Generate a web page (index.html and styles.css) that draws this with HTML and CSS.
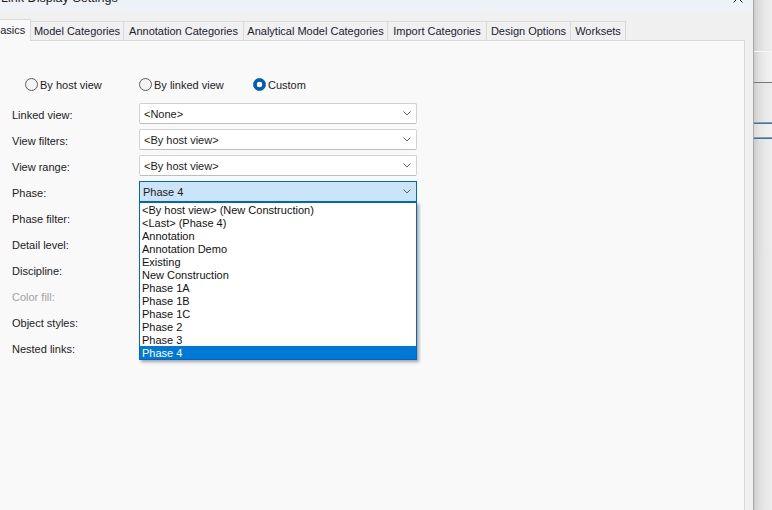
FILE: index.html
```html
<!DOCTYPE html>
<html lang="en">
<head>
<meta charset="utf-8">
<title>Link Display Settings</title>
<link rel="stylesheet" href="styles.css">
</head>
<body>
<div class="screen">
  <div class="dialog">
    <div class="titlebar">
      <span class="title">Link Display Settings</span>
      <svg class="close" width="10" height="10" viewBox="0 0 10 10"><path d="M0.5 0.5 L9.5 9.5 M9.5 0.5 L0.5 9.5" stroke="#1a1a1a" stroke-width="1" fill="none"/></svg>
    </div>
    <div class="body">
      <div class="tabs">
        <div class="tab active t-basics">Basics</div>
        <div class="tab t-model">Model Categories</div>
        <div class="tab t-annot">Annotation Categories</div>
        <div class="tab t-analyt">Analytical Model Categories</div>
        <div class="tab t-import">Import Categories</div>
        <div class="tab t-design">Design Options</div>
        <div class="tab t-work">Worksets</div>
      </div>
      <div class="panel">
        <div class="radios">
          <div class="radio"><span class="dot"></span><span>By host view</span></div>
          <div class="radio"><span class="dot"></span><span>By linked view</span></div>
          <div class="radio"><span class="dot checked"></span><span>Custom</span></div>
        </div>
        <div class="form">
          <div class="lbl">Linked view:</div>
          <div class="combo"><span>&lt;None&gt;</span><svg class="chev" width="8" height="5" viewBox="0 0 8 5"><path d="M0.5 0.5 L4 4 L7.5 0.5" stroke="#5f5f5f" fill="none"/></svg></div>

          <div class="lbl">View filters:</div>
          <div class="combo"><span>&lt;By host view&gt;</span><svg class="chev" width="8" height="5" viewBox="0 0 8 5"><path d="M0.5 0.5 L4 4 L7.5 0.5" stroke="#5f5f5f" fill="none"/></svg></div>

          <div class="lbl">View range:</div>
          <div class="combo"><span>&lt;By host view&gt;</span><svg class="chev" width="8" height="5" viewBox="0 0 8 5"><path d="M0.5 0.5 L4 4 L7.5 0.5" stroke="#5f5f5f" fill="none"/></svg></div>

          <div class="lbl">Phase:</div>
          <div class="combo-wrap">
            <div class="combo focused"><span>Phase 4</span><svg class="chev" width="8" height="5" viewBox="0 0 8 5"><path d="M0.5 0.5 L4 4 L7.5 0.5" stroke="#5f5f5f" fill="none"/></svg></div>
            <ul class="list">
              <li>&lt;By host view&gt; (New Construction)</li>
              <li>&lt;Last&gt; (Phase 4)</li>
              <li>Annotation</li>
              <li>Annotation Demo</li>
              <li>Existing</li>
              <li>New Construction</li>
              <li>Phase 1A</li>
              <li>Phase 1B</li>
              <li>Phase 1C</li>
              <li>Phase 2</li>
              <li>Phase 3</li>
              <li class="sel">Phase 4</li>
            </ul>
          </div>

          <div class="lbl">Phase filter:</div>
          <div class="combo"></div>

          <div class="lbl">Detail level:</div>
          <div class="combo"></div>

          <div class="lbl">Discipline:</div>
          <div class="combo"></div>

          <div class="lbl disabled">Color fill:</div>
          <div class="combo"></div>

          <div class="lbl">Object styles:</div>
          <div class="combo"></div>

          <div class="lbl">Nested links:</div>
          <div class="combo"></div>
        </div>
      </div>
    </div>
  </div>
  <div class="backdrop">
    <div class="bk-seg bk-h51"></div>
    <div class="bk-line bk-light"></div>
    <div class="bk-seg bk-h30"></div>
    <div class="bk-line bk-dark"></div>
    <div class="bk-seg bk-h39"></div>
    <div class="bk-line bk-grey"></div>
    <div class="bk-line bk-blue"></div>
    <div class="bk-seg bk-h13"></div>
    <div class="bk-line bk-grey"></div>
    <div class="bk-line bk-blue"></div>
  </div>
</div>
</body>
</html>
```

FILE: styles.css
```css
* { box-sizing: border-box; }

html, body {
  margin: 0;
  padding: 0;
  width: 772px;
  height: 510px;
  overflow: hidden;
  background: #f0f0f0;
}

body {
  font-family: "Liberation Sans", Arial, sans-serif;
  font-size: 11px;
  color: #1b1b1b;
}

.screen {
  display: flex;
  width: 772px;
  height: 510px;
}

/* ---------- dialog ---------- */
.dialog {
  width: 754px;
  height: 510px;
  display: flex;
  flex-direction: column;
  background: #f0f0f0;
  border-right: 1px solid #a8a8a8;
}

.titlebar {
  height: 12px;
  flex: none;
  background: #eef2f7;
  display: flex;
  align-items: flex-start;
  overflow: hidden;
}

.title {
  font-size: 12.6px;
  line-height: 12px;
  margin-top: -8px;
  padding-left: 1px;
  color: #1b1b1b;
  white-space: nowrap;
}

.close {
  margin-left: auto;
  margin-right: 10px;
  margin-top: -7px;
}

.body {
  flex: 1;
  display: flex;
  flex-direction: column;
  padding-top: 7px;
  padding-right: 8px;
  min-height: 0;
}

/* ---------- tabs ---------- */
.tabs {
  display: flex;
  align-items: flex-end;
  height: 21px;
  margin-left: -13px;
  flex: none;
}

.tab {
  height: 19px;
  line-height: 19px;
  border: 1px solid #d9d9d9;
  border-bottom: none;
  background: #f0f0f0;
  text-align: center;
  white-space: nowrap;
  margin-left: -1px;
  color: #1c1c30;
}

.tab:first-child { margin-left: 0; }

.tab.active {
  height: 22px;
  line-height: 21px;
  margin-bottom: -1px;
  background: #f9f9f9;
  position: relative;
  z-index: 2;
}

.t-basics { width: 44px; }
.t-model  { width: 94px; }
.t-annot  { width: 121px; }
.t-analyt { width: 145px; }
.t-import { width: 100px; }
.t-design { width: 85px; }
.t-work   { width: 56px; }

/* ---------- panel ---------- */
.panel {
  flex: 1;
  background: #f9f9f9;
  border: 1px solid #d9d9d9;
  border-left: none;
  border-bottom: none;
  position: relative;
  z-index: 1;
}

.radios {
  display: grid;
  grid-template-columns: 114px 114px auto;
  padding-left: 25px;
  margin-top: 37px;
  height: 13px;
}

.radio {
  display: flex;
  align-items: center;
  gap: 2px;
  height: 13px;
  white-space: nowrap;
}

.dot {
  width: 13px;
  height: 13px;
  flex: none;
  border-radius: 50%;
  border: 1px solid #5c5c5c;
  background: #f4f4f4;
}

.dot.checked {
  border-color: #005fb8;
  background: radial-gradient(circle, #ffffff 0 2.6px, #005fb8 3.1px);
}

.form {
  display: grid;
  grid-template-columns: 127px 278px;
  grid-auto-rows: 21px;
  row-gap: 5px;
  margin-top: 12px;
  padding-left: 12px;
}

.lbl {
  display: flex;
  align-items: center;
  padding-top: 2px;
  white-space: nowrap;
}

.lbl.disabled { color: #a2a2a2; }

.combo {
  height: 21px;
  background: #ffffff;
  border: 1px solid #d2d2d2;
  border-bottom-color: #bdbdbd;
  border-radius: 2px;
  display: flex;
  align-items: center;
  justify-content: space-between;
  padding: 1px 5px 0 4px;
  white-space: nowrap;
}

.combo .chev { margin-top: -1px; }

.combo-wrap {
  position: relative;
}

.combo.focused {
  background: #cce4f7;
  border-color: #0067c0;
  border-radius: 0;
  padding-left: 3px;
}

.chev { flex: none; }

.list {
  position: absolute;
  left: 0;
  right: 0;
  top: 100%;
  margin: 0;
  padding: 0;
  list-style: none;
  background: #ffffff;
  border: 1px solid #0067c0;
  box-shadow: 2px 2px 3px rgba(0, 0, 0, 0.35);
  z-index: 5;
}

.list li {
  height: 13px;
  line-height: 14px;
  padding-left: 2px;
  white-space: nowrap;
  color: #111111;
}

.list li.sel {
  background: #0078d7;
  color: #ffffff;
}

/* ---------- background window on the right ---------- */
.backdrop {
  flex: 1;
  height: 510px;
  background: linear-gradient(to right, #cdcdcd 0, #dedede 5px, #e9e9e9 12px, #ededed 18px);
  display: flex;
  flex-direction: column;
}

.bk-seg { flex: none; }
.bk-h51 { height: 51px; }
.bk-h30 { height: 30px; background: linear-gradient(to right, rgba(255,255,255,0) 0, rgba(255,255,255,0.3) 100%); }
.bk-h39 { height: 39px; }
.bk-h13 { height: 13px; background: rgba(255,255,255,0.25); }

.bk-line { height: 1px; flex: none; }
.bk-light { background: #f6f6f6; }
.bk-dark { background: #767676; }
.bk-grey { background: #9a9a9a; }
.bk-blue { background: #2f74c0; }
```
